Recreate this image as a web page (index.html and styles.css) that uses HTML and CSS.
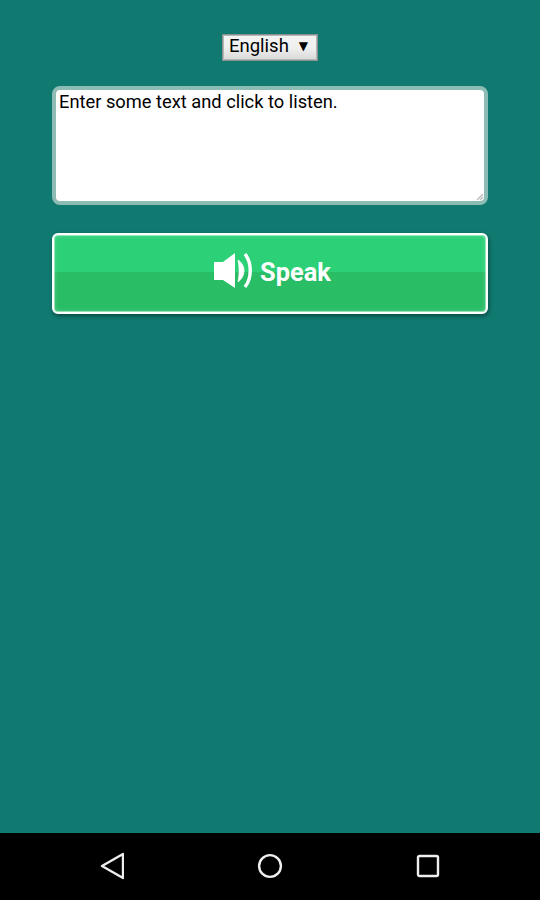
FILE: index.html
```html
<!DOCTYPE html>
<html lang="en">
<head>
  <meta charset="UTF-8" />
  <meta name="viewport" content="width=device-width, initial-scale=1.0" />
  <title>Text to Speech</title>
  <link rel="stylesheet" href="styles.css">
</head>
<body>
  <div class="app">
    <div class="lang-row">
      <div class="lang-select">
        <span>English</span>
        <span class="arrow">▼</span>
      </div>
    </div>

    <div class="text-box">
      <div class="text-input">Enter some text and click to listen.</div>
      <svg class="grip" width="8" height="8" viewBox="0 0 8 8">
        <path d="M1 7 L7 1 M4 7 L7 4" stroke="#bbb" stroke-width="1.4" fill="none" />
      </svg>
    </div>

    <div class="speak-btn">
      <svg class="speaker" width="38" height="36" viewBox="0 0 38 36">
        <path d="M0 9 H9 L21 0 V35 L9 27 H0 Z" fill="#fff" />
        <path d="M24 7 C32 12 32 23 24 29 C25.5 23 25.5 13 24 7 Z" fill="#fff" stroke="#fff" stroke-width="0.8" />
        <path d="M31 1 C38 10 38 25 31 34" stroke="#fff" stroke-width="3.4" fill="none" />
      </svg>
      <span>Speak</span>
    </div>
  </div>

  <!-- Android nav bar -->
  <div class="navbar">
    <svg width="24" height="28" viewBox="0 0 24 28">
      <path d="M23 2 V26 L2 14 Z" fill="none" stroke="#eee" stroke-width="2.4" stroke-linejoin="round" />
    </svg>
    <svg width="26" height="26" viewBox="0 0 26 26">
      <circle cx="13" cy="13" r="10.9" fill="none" stroke="#eee" stroke-width="2.4" />
    </svg>
    <svg width="24" height="24" viewBox="0 0 24 24">
      <rect x="2" y="2" width="20" height="20" rx="1.5" fill="none" stroke="#eee" stroke-width="2.4" />
    </svg>
  </div>
</body>
</html>
```

FILE: styles.css
```css
body, html {
  margin: 0;
  padding: 0;
  width: 100%;
  height: 100%;
  overflow: hidden;
  background: #107a70;
  font-family: Roboto, sans-serif;
}
body {
  display: flex;
  flex-direction: column;
}
.app {
  flex: 1;
  padding: 34px 52px 0;
  box-sizing: border-box;
}
.lang-row {
  display: flex;
  justify-content: center;
}
.lang-select {
  width: 96px;
  height: 27px;
  box-sizing: border-box;
  border: 1px solid #87918f;
  box-shadow: inset 0 0 0 1px #b4b8b7;
  background: linear-gradient(#f4f4f4, #f0f0f0 50%, #d8d8d8);
  color: #000;
  font-size: 18.5px;
  display: flex;
  align-items: center;
  gap: 10px;
  padding: 0 0 3px 6px;
}
.arrow {
  font-family: "DejaVu Sans", sans-serif;
  font-size: 12px;
}
.text-box {
  position: relative;
  margin-top: 25px;
  height: 119px;
  box-sizing: border-box;
  border: 4px solid #8dbcb5;
  border-radius: 8px;
  background: #fff;
}
.text-input {
  padding: 2px 3px;
  font-size: 18.3px;
  line-height: 20px;
  color: #000;
}
.grip {
  position: absolute;
  right: 0;
  bottom: 0;
}
.speak-btn {
  margin-top: 28px;
  height: 81px;
  box-sizing: border-box;
  border: 2px solid #fff;
  border-radius: 6px;
  background: linear-gradient(#2bd077 0, #2bd077 48%, #29bd66 48%, #29bd66 100%);
  box-shadow: 1px 2px 4px rgba(0, 0, 0, 0.4), inset 0 0 0 1px rgba(255, 255, 255, 0.45), inset 0 0 5px rgba(255, 255, 255, 0.3);
  display: flex;
  justify-content: center;
  align-items: center;
  gap: 8px;
  padding: 0 0 4px 5px;
  color: #fff;
  font-size: 25.4px;
  font-weight: 700;
}
.speaker {
  margin-bottom: 2px;
}
.navbar {
  height: 67px;
  background: #000;
  display: flex;
  justify-content: space-between;
  align-items: center;
  padding: 0 100px 1px;
  box-sizing: border-box;
}
```
